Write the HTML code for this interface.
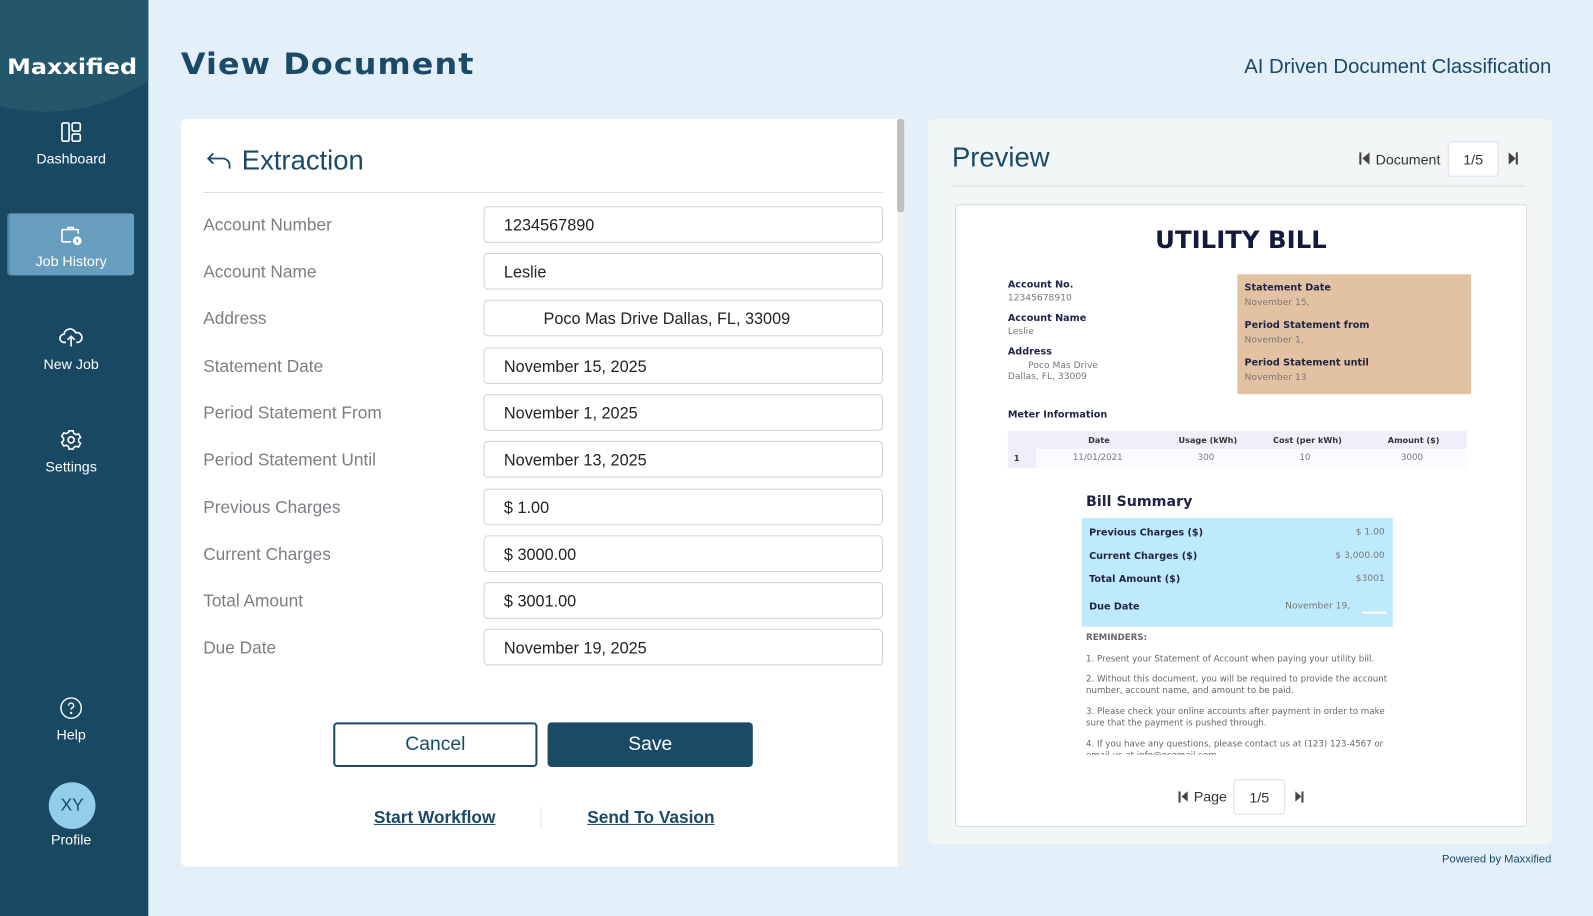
<!DOCTYPE html>
<html><head><meta charset="utf-8"><style>
*{box-sizing:border-box;margin:0;padding:0}
body{width:1593px;height:902px;background:#e3f0f9;font-family:"Liberation Sans",sans-serif;position:relative;overflow:hidden;color:#1a4a66}
#wrap{position:absolute;left:0;top:0;width:1568px;height:888px;transform:scale(1.01595);transform-origin:0 0}
.a{position:absolute}
#side{left:0;top:0;width:146px;height:902px;background:#184862;overflow:hidden}
#blob{left:-120px;top:-180px;width:330px;height:290px;border-radius:50%;background:#24566c}
.nav{width:140px;text-align:center;color:#fff;font-size:14px}
.nav svg{display:block;margin:0 auto 6px}
.lbl{left:200px;font-size:17px;color:#7b7f84}
.inp{left:476px;width:393px;height:36px;border:1px solid #cfd3d6;border-radius:4px;background:#fff;font-size:16px;color:#222;padding:10px 0 0 19px}
.doc{font-family:"DejaVu Sans","Liberation Sans",sans-serif;color:#1a1f3d}
.b{font-weight:bold;font-size:9.5px;color:#1e2345}
.s{font-size:9px;color:#777}
.r{font-size:8.5px;color:#666}
</style></head><body><div id="wrap">
<div id="side" class="a">
<div id="blob" class="a"></div>
<div class="a" style="left:7px;top:54px;font-size:21px;font-weight:900;color:#fff;font-family:'DejaVu Sans',sans-serif;transform:scaleX(1.12);transform-origin:left">Maxxified</div>
<div class="a nav" style="top:118px"><svg width="24" height="24" viewBox="0 0 24 24" fill="none" stroke="#fff" stroke-width="1.6"><rect x="3" y="3" width="7" height="18" rx="1.5"/><rect x="13" y="3" width="8" height="8" rx="1.5"/><rect x="13" y="14" width="8" height="7" rx="1.5"/></svg>Dashboard</div>
<div class="a" style="left:7px;top:210px;width:125px;height:61px;background:#689ebd;border-left:3px solid #4f88aa;border-radius:3px"></div>
<div class="a nav" style="top:219px"><svg width="24" height="24" viewBox="0 0 24 24" fill="none" stroke="#fff" stroke-width="1.6"><path d="M12 19H4a1 1 0 0 1-1-1V8a1 1 0 0 1 1-1h14a1 1 0 0 1 1 1v3"/><path d="M9 7V5h5v2"/><circle cx="18" cy="18" r="3.5" fill="#fff"/><path d="M18 16.5v1.8l1 .8" stroke="#689ebd"/></svg>Job History</div>
<div class="a nav" style="top:320px"><svg width="26" height="24" viewBox="0 0 26 24" fill="none" stroke="#fff" stroke-width="1.6"><path d="M8 17H6a4 4 0 0 1 0-8 6 6 0 0 1 11.5-1.5A4.5 4.5 0 0 1 20 17h-2"/><path d="M13 21V11M9.5 14.5 13 11l3.5 3.5"/></svg>New Job</div>
<div class="a nav" style="top:421px"><svg width="24" height="24" viewBox="0 0 24 24" fill="none" stroke="#fff" stroke-width="1.6"><circle cx="12" cy="12" r="3"/><path d="M10 3h4l.6 2.5 2.2 1.3 2.5-.8 2 3.5-1.9 1.8v2.4l1.9 1.8-2 3.5-2.5-.8-2.2 1.3L14 21h-4l-.6-2.5-2.2-1.3-2.5.8-2-3.5 1.9-1.8v-2.4L2.7 8.5l2-3.5 2.5.8 2.2-1.3z"/></svg>Settings</div>
<div class="a nav" style="top:685px"><svg width="24" height="24" viewBox="0 0 24 24" fill="none" stroke="#fff" stroke-width="1.4"><circle cx="12" cy="12" r="10"/><path d="M9.5 9.5a2.5 2.5 0 1 1 3.5 2.3c-.7.3-1 .9-1 1.7"/><circle cx="12" cy="16.8" r=".5" fill="#fff"/></svg>Help</div>
<div class="a" style="left:48px;top:770px;width:46px;height:46px;border-radius:50%;background:#92cdea;color:#1a4a66;font-size:17px;text-align:center;line-height:46px">XY</div>
<div class="a nav" style="top:818px">Profile</div>
</div>

<div class="a" style="left:178px;top:46px;font-size:29px;font-weight:900;color:#1a4a66;font-family:'DejaVu Sans',sans-serif;letter-spacing:1px;transform:scaleX(1.08);transform-origin:left">View Document</div>
<div class="a" style="right:41px;top:55px;font-size:20px;color:#1a4a66">AI Driven Document Classification</div>

<div class="a" style="left:178px;top:117px;width:706px;height:736px;background:#fff;border-radius:6px 0 0 6px"></div>
<div class="a" style="left:883px;top:117px;width:7px;height:736px;background:#f1f1f1"></div>
<div class="a" style="left:883px;top:117px;width:7px;height:92px;background:#bfbfbf;border-radius:3px"></div>
<svg class="a" style="left:203px;top:148px" width="26" height="22" viewBox="0 0 26 22" fill="none" stroke="#1a4a66" stroke-width="1.8"><path d="M7 3 2 8l5 5"/><path d="M2 8h14a7 7 0 0 1 7 7v3"/></svg>
<div class="a" style="left:238px;top:143px;font-size:27px;color:#1a4a66">Extraction</div>
<div class="a" style="left:200px;top:189px;width:669px;height:1px;background:#ddd"></div>

<div class="a lbl" style="top:212px">Account Number</div><div class="a inp" style="top:203px">1234567890</div>
<div class="a lbl" style="top:258px">Account Name</div><div class="a inp" style="top:249px">Leslie</div>
<div class="a lbl" style="top:304px">Address</div><div class="a inp" style="top:295px;padding-left:58px">Poco Mas Drive Dallas, FL, 33009</div>
<div class="a lbl" style="top:351px">Statement Date</div><div class="a inp" style="top:342px">November 15, 2025</div>
<div class="a lbl" style="top:397px">Period Statement From</div><div class="a inp" style="top:388px">November 1, 2025</div>
<div class="a lbl" style="top:443px">Period Statement Until</div><div class="a inp" style="top:434px">November 13, 2025</div>
<div class="a lbl" style="top:490px">Previous Charges</div><div class="a inp" style="top:481px">$ 1.00</div>
<div class="a lbl" style="top:536px">Current Charges</div><div class="a inp" style="top:527px">$ 3000.00</div>
<div class="a lbl" style="top:582px">Total Amount</div><div class="a inp" style="top:573px">$ 3001.00</div>
<div class="a lbl" style="top:628px">Due Date</div><div class="a inp" style="top:619px">November 19, 2025</div>

<div class="a" style="left:328px;top:711px;width:201px;height:44px;border:2px solid #1a4a66;border-radius:4px;text-align:center;line-height:40px;font-size:19px;color:#1a4a66">Cancel</div>
<div class="a" style="left:539px;top:711px;width:202px;height:44px;background:#1a4a66;border-radius:4px;text-align:center;line-height:44px;font-size:19px;color:#fff">Save</div>
<div class="a" style="left:368px;top:795px;font-size:17px;font-weight:bold;color:#1a4a66;text-decoration:underline">Start Workflow</div>
<div class="a" style="left:532px;top:794px;width:1px;height:22px;background:#e5e5e5"></div>
<div class="a" style="left:578px;top:795px;font-size:17px;font-weight:bold;color:#1a4a66;text-decoration:underline">Send To Vasion</div>

<div class="a" style="left:913px;top:117px;width:615px;height:714px;background:#f3f6f7;border-radius:6px"></div>
<div class="a" style="left:937px;top:140px;font-size:27px;color:#1a4a66">Preview</div>
<div class="a" style="left:937px;top:182px;width:565px;height:2px;background:#e6e9ea"></div>
<div class="a" style="left:1338px;top:150px;width:2px;height:12px;background:#444"></div><div class="a" style="left:1341px;top:150px;width:0;height:0;border-top:6px solid transparent;border-bottom:6px solid transparent;border-right:7px solid #444"></div>
<div class="a" style="left:1354px;top:149px;font-size:14px;color:#333">Document</div>
<div class="a" style="left:1425px;top:139px;width:50px;height:35px;background:#fff;border:1px solid #dde;border-radius:4px;text-align:center;line-height:34px;font-size:14px;color:#333">1/5</div>
<div class="a" style="left:1485px;top:150px;width:0;height:0;border-top:6px solid transparent;border-bottom:6px solid transparent;border-left:7px solid #444"></div><div class="a" style="left:1492px;top:150px;width:2px;height:12px;background:#444"></div>

<div class="a doc" style="left:940px;top:201px;width:563px;height:613px;background:#fff;border:1px solid #d8dcde;border-radius:3px;overflow:hidden">
<div class="a" style="left:0;width:561px;top:20px;text-align:center;font-size:24px;font-weight:bold;color:#141a3a">UTILITY BILL</div>
<div class="a b" style="left:51px;top:73px">Account No.</div><div class="a s" style="left:51px;top:87px">12345678910</div>
<div class="a b" style="left:51px;top:106px">Account Name</div><div class="a s" style="left:51px;top:120px">Leslie</div>
<div class="a b" style="left:51px;top:139px">Address</div><div class="a s" style="left:51px;top:153px;line-height:11px">&nbsp;&nbsp;&nbsp;&nbsp;&nbsp;&nbsp;&nbsp;Poco Mas Drive<br>Dallas, FL, 33009</div>
<div class="a" style="left:277px;top:68px;width:230px;height:118px;background:#e3c2a3"></div>
<div class="a b" style="left:284px;top:76px">Statement Date</div><div class="a s" style="left:284px;top:91px">November 15,</div>
<div class="a b" style="left:284px;top:113px">Period Statement from</div><div class="a s" style="left:284px;top:128px">November 1,</div>
<div class="a b" style="left:284px;top:150px">Period Statement until</div><div class="a s" style="left:284px;top:165px">November 13</div>
<div class="a b" style="left:51px;top:201px">Meter Information</div>
<div class="a" style="left:51px;top:222px;width:452px;height:18px;background:#eeeffb"></div>
<div class="a" style="left:51px;top:240px;width:452px;height:19px;background:#fafaff"></div>
<div class="a" style="left:51px;top:240px;width:28px;height:19px;background:#eeeffb"></div>
<div class="a" style="font-size:8px;font-weight:bold;color:#333;top:227px;left:130px">Date</div>
<div class="a" style="font-size:8px;font-weight:bold;color:#333;top:227px;left:219px">Usage (kWh)</div>
<div class="a" style="font-size:8px;font-weight:bold;color:#333;top:227px;left:312px">Cost (per kWh)</div>
<div class="a" style="font-size:8px;font-weight:bold;color:#333;top:227px;left:425px">Amount ($)</div>
<div class="a" style="font-size:8px;font-weight:bold;color:#333;top:245px;left:57px">1</div>
<div class="a s" style="font-size:8.5px;top:244px;left:115px">11/01/2021</div>
<div class="a s" style="font-size:8.5px;top:244px;left:238px">300</div>
<div class="a s" style="font-size:8.5px;top:244px;left:338px">10</div>
<div class="a s" style="font-size:8.5px;top:244px;left:438px">3000</div>
<div class="a" style="left:128px;top:284px;font-size:14px;font-weight:bold;color:#1e2345">Bill Summary</div>
<div class="a" style="left:124px;top:308px;width:306px;height:107px;background:#bfeafd"></div>
<div class="a b" style="left:131px;top:317px">Previous Charges ($)</div><div class="a s" style="right:139px;top:317px">$ 1.00</div>
<div class="a b" style="left:131px;top:340px">Current Charges ($)</div><div class="a s" style="right:139px;top:340px">$ 3,000.00</div>
<div class="a b" style="left:131px;top:363px">Total Amount ($)</div><div class="a s" style="right:139px;top:363px">$3001</div>
<div class="a b" style="left:131px;top:390px">Due Date</div><div class="a s" style="right:173px;top:390px">November 19,</div>
<div class="a" style="left:400px;top:400px;width:24px;height:2px;background:#fff"></div>
<div class="a r" style="left:128px;top:421px;font-weight:bold">REMINDERS:</div>
<div class="a r" style="left:128px;top:442px;width:300px">1. Present your Statement of Account when paying your utility bill.</div>
<div class="a r" style="left:128px;top:462px;width:300px;line-height:10.5px">2. Without this document, you will be required to provide the account number, account name, and amount to be paid.</div>
<div class="a r" style="left:128px;top:494px;width:300px;line-height:10.5px">3. Please check your online accounts after payment in order to make sure that the payment is pushed through.</div>
<div class="a r" style="left:128px;top:526px;width:300px;line-height:10.5px;height:15px;overflow:hidden">4. If you have any questions, please contact us at (123) 123-4567 or email us at info@ocomail.com.</div>
<div class="a" style="left:219px;top:577px;width:2px;height:11px;background:#444"></div><div class="a" style="left:222px;top:577px;border-top:5.5px solid transparent;border-bottom:5.5px solid transparent;border-right:6px solid #444"></div>
<div class="a" style="left:234px;top:574px;font-size:14px;color:#333;font-family:'Liberation Sans',sans-serif">Page</div>
<div class="a" style="left:273px;top:565px;width:51px;height:35px;border:1px solid #dde;border-radius:4px;text-align:center;line-height:34px;font-size:14px;color:#333;font-family:'Liberation Sans',sans-serif">1/5</div>
<div class="a" style="left:334px;top:577px;border-top:5.5px solid transparent;border-bottom:5.5px solid transparent;border-left:6px solid #444"></div><div class="a" style="left:340px;top:577px;width:2px;height:11px;background:#444"></div>
</div>
<div class="a" style="right:41px;top:840px;font-size:11px;color:#1a4a66">Powered by Maxxified</div>
</div></body></html>
